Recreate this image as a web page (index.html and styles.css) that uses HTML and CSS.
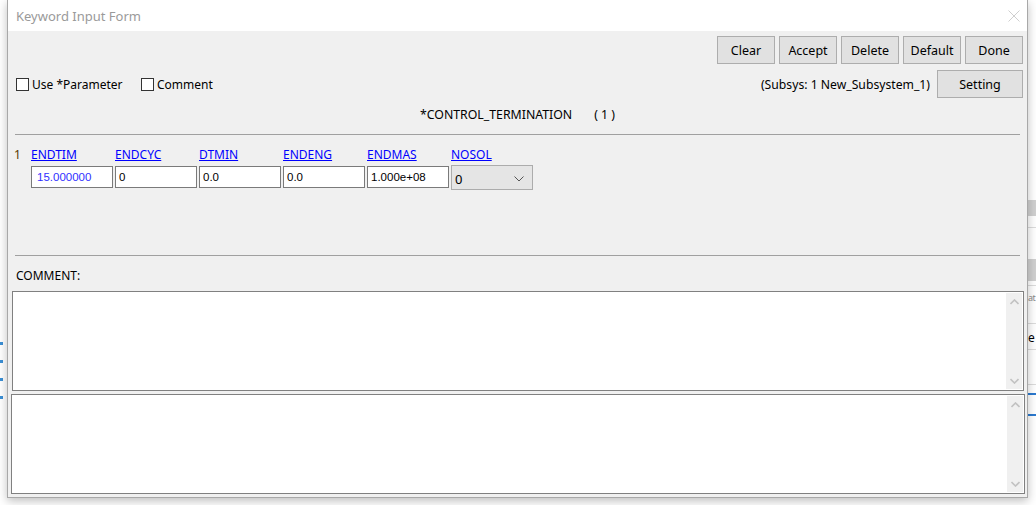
FILE: index.html
```html
<!DOCTYPE html>
<html>
<head>
<meta charset="utf-8">
<title>Keyword Input Form</title>
<link rel="stylesheet" href="styles.css">
</head>
<body>
<div class="screen">
  <div class="left-strip">
    <span class="dot"></span><span class="dot"></span><span class="dot"></span><span class="dot"></span>
  </div>

  <div class="dialog">
    <div class="titlebar">
      <span class="title">Keyword Input Form</span>
      <svg class="close" width="12" height="12" viewBox="0 0 12 12"><path d="M0.5 0.5 L11.5 11.5 M11.5 0.5 L0.5 11.5" stroke="#cfcfcf" stroke-width="1" fill="none"/></svg>
    </div>

    <div class="body">
      <div class="toolbar">
        <button class="btn">Clear</button>
        <button class="btn">Accept</button>
        <button class="btn">Delete</button>
        <button class="btn">Default</button>
        <button class="btn">Done</button>
      </div>

      <div class="optrow">
        <label class="chk chk-param"><span class="box"></span>Use *Parameter</label>
        <label class="chk"><span class="box"></span>Comment</label>
        <span class="subsys">(Subsys: 1 New_Subsystem_1)</span>
        <button class="btn btn-setting">Setting</button>
      </div>

      <div class="kwtitle">*CONTROL_TERMINATION<span class="kwcount">( 1 )</span></div>
      <div class="rule"></div>

      <div class="fields">
        <div class="rownum">1</div>
        <div class="fgrid">
          <a class="flabel">ENDTIM</a>
          <a class="flabel">ENDCYC</a>
          <a class="flabel">DTMIN</a>
          <a class="flabel">ENDENG</a>
          <a class="flabel">ENDMAS</a>
          <a class="flabel">NOSOL</a>
          <div class="finput blue">15.000000</div>
          <div class="finput">0</div>
          <div class="finput">0.0</div>
          <div class="finput">0.0</div>
          <div class="finput">1.000e+08</div>
          <div class="fselect"><span>0</span>
            <svg width="10" height="6" viewBox="0 0 10 6"><path d="M0.5 0.5 L5 5 L9.5 0.5" stroke="#555" stroke-width="1" fill="none"/></svg>
          </div>
        </div>
      </div>
      <div class="rule"></div>

      <div class="comment-label">COMMENT:</div>
      <div class="ta ta1">
        <div class="sb">
          <svg width="9" height="6" viewBox="0 0 9 6"><path d="M0.5 5 L4.5 1 L8.5 5" stroke="#c2c2c2" stroke-width="1.6" fill="none"/></svg>
          <svg width="9" height="6" viewBox="0 0 9 6"><path d="M0.5 1 L4.5 5 L8.5 1" stroke="#c2c2c2" stroke-width="1.6" fill="none"/></svg>
        </div>
      </div>
      <div class="ta ta2">
        <div class="sb">
          <svg width="9" height="6" viewBox="0 0 9 6"><path d="M0.5 5 L4.5 1 L8.5 5" stroke="#c2c2c2" stroke-width="1.6" fill="none"/></svg>
          <svg width="9" height="6" viewBox="0 0 9 6"><path d="M0.5 1 L4.5 5 L8.5 1" stroke="#c2c2c2" stroke-width="1.6" fill="none"/></svg>
        </div>
      </div>
    </div>
  </div>

  <div class="right-strip">
    <div class="rs-block rs-b1"></div>
    <div class="rs-line rs-l1"></div>
    <div class="rs-block rs-b2"></div>
    <div class="rs-line rs-l2"></div>
    <div class="rs-text rs-t1">at</div>
    <div class="rs-line rs-l3"></div>
    <div class="rs-text rs-t2">e</div>
    <div class="rs-line rs-l4"></div>
    <div class="rs-line rs-l5"></div>
    <div class="rs-blue rs-u1"></div>
    <div class="rs-blue rs-u2"></div>
  </div>
</div>
</body>
</html>
```

FILE: styles.css
```css
* { box-sizing: border-box; }
html, body { margin: 0; padding: 0; }
body {
  background: #ffffff;
  width: 1036px;
  height: 505px;
  overflow: hidden;
  font-family: "Noto Sans", "Open Sans", "Liberation Sans", sans-serif;
  font-size: 12px;
  color: #000;
}
.screen { display: flex; height: 505px; width: 1036px; }

/* background strips */
.left-strip {
  width: 7px; flex: none;
  display: flex; flex-direction: column; gap: 15px;
  padding-top: 342px;
}
.dot { width: 3px; height: 3px; background: #3b8fd5; display: block; }

.right-strip { width: 8px; flex: none; padding-top: 200px; }
.rs-block { background: #d0d0d0; }
.rs-b1 { height: 16px; }
.rs-b2 { height: 22px; }
.rs-line { height: 1px; background: #dcdcdc; }
.rs-l1 { margin-top: 11px; margin-bottom: 31px; }
.rs-l2 { margin-top: 4px; }
.rs-text { white-space: nowrap; font-family: "Noto Sans", sans-serif; line-height: 14px; }
.rs-t1 { color: #8a8a8a; font-size: 9px; margin-top: 5px; letter-spacing: -0.5px; }
.rs-l3 { margin-top: 18px; }
.rs-t2 { color: #000; font-size: 12px; margin-top: 7px; }
.rs-l4 { margin-top: 4px; }
.rs-l5 { margin-top: 34px; }
.rs-blue { height: 2px; background: #2b7ad0; }
.rs-u1 { margin-top: 8px; }
.rs-u2 { margin-top: 19px; }

/* dialog */
.dialog {
  width: 1021px; height: 498px; flex: none;
  border: 1px solid #a8a8a8; border-top: none;
  background: #f0f0f0;
  box-shadow: 0 3px 9px rgba(0,0,0,0.25);
  display: flex; flex-direction: column;
  position: relative; z-index: 1;
}
.titlebar {
  height: 31px; flex: none;
  background: #fff;
  display: flex; align-items: center; justify-content: space-between;
  padding: 0 7px 0 8px;
}
.title { color: #9a9a9a; font-size: 13px; line-height: 16px; padding-top: 1px; }
.close { display: block; }

.body {
  flex: 1;
  display: flex; flex-direction: column;
  padding: 5px 3px 3px 3px;
}

.toolbar { display: flex; justify-content: flex-end; gap: 4px; height: 28px; margin-right: 1px; }
.btn {
  width: 58px; height: 28px;
  background: #e1e1e1; border: 1px solid #adadad;
  font-family: "Noto Sans", "Open Sans", sans-serif; font-size: 12.5px; color: #000;
  padding: 0; margin: 0;
}

.optrow { display: flex; align-items: center; height: 28px; margin-top: 6px; margin-right: 1px; }
.chk { display: flex; align-items: center; gap: 3px; font-size: 12px; }
.chk-param { width: 125px; margin-left: 5px; }
.box { width: 13px; height: 13px; border: 1px solid #333; background: #fff; display: block; }
.subsys { margin-left: auto; margin-right: 7px; font-size: 12.2px; }
.btn-setting { width: 86px; }

.kwtitle {
  height: 36px; display: flex; align-items: center; justify-content: center;
  padding-bottom: 3px; padding-left: 0; font-size: 12.3px;
}
.kwcount { margin-left: 22px; }

.rule { height: 1px; background: #a0a0a0; margin: 0 4px; flex: none; }

.fields { height: 120px; display: flex; padding-top: 10px; }
.rownum { width: 20px; padding-left: 3px; color: #5a3a00; line-height: 20px; font-size: 12px; }
.fgrid {
  display: grid;
  grid-template-columns: repeat(6, 82px);
  grid-template-rows: 20px 22px;
  column-gap: 2px; row-gap: 1px;
  align-content: start;
}
.flabel {
  color: #0000ff; text-decoration: underline;
  font-size: 12px; line-height: 20px;
}
.finput {
  height: 22px; border: 1px solid #7a7a7a; background: #fff;
  font-family: "Liberation Sans", Arial, sans-serif; font-size: 11.5px;
  line-height: 20px; padding-left: 3px; color: #000;
}
.finput.blue { color: #3030ff; padding-left: 5px; }
.fselect {
  height: 25px; margin-top: -1px;
  background: #e5e5e5; border: 1px solid #acacac;
  display: flex; align-items: center; justify-content: space-between;
  padding: 2px 8px 0 3px; font-size: 13px;
}

.comment-label { height: 35px; padding: 10px 0 0 5px; line-height: 20px; font-size: 12px; }

.ta {
  height: 100px; flex: none;
  background: #fff; border: 1px solid #808080;
  display: flex; justify-content: flex-end;
  padding: 1px;
}
.ta1 { margin-left: 1px; width: 1012px; }
.ta2 { margin-top: 3px; width: 1014px; }
.sb {
  width: 16px; background: #f0f0f0;
  display: flex; flex-direction: column; justify-content: space-between; align-items: center;
  padding: 6px 0 5px 0;
}
.sb svg { display: block; }
```
